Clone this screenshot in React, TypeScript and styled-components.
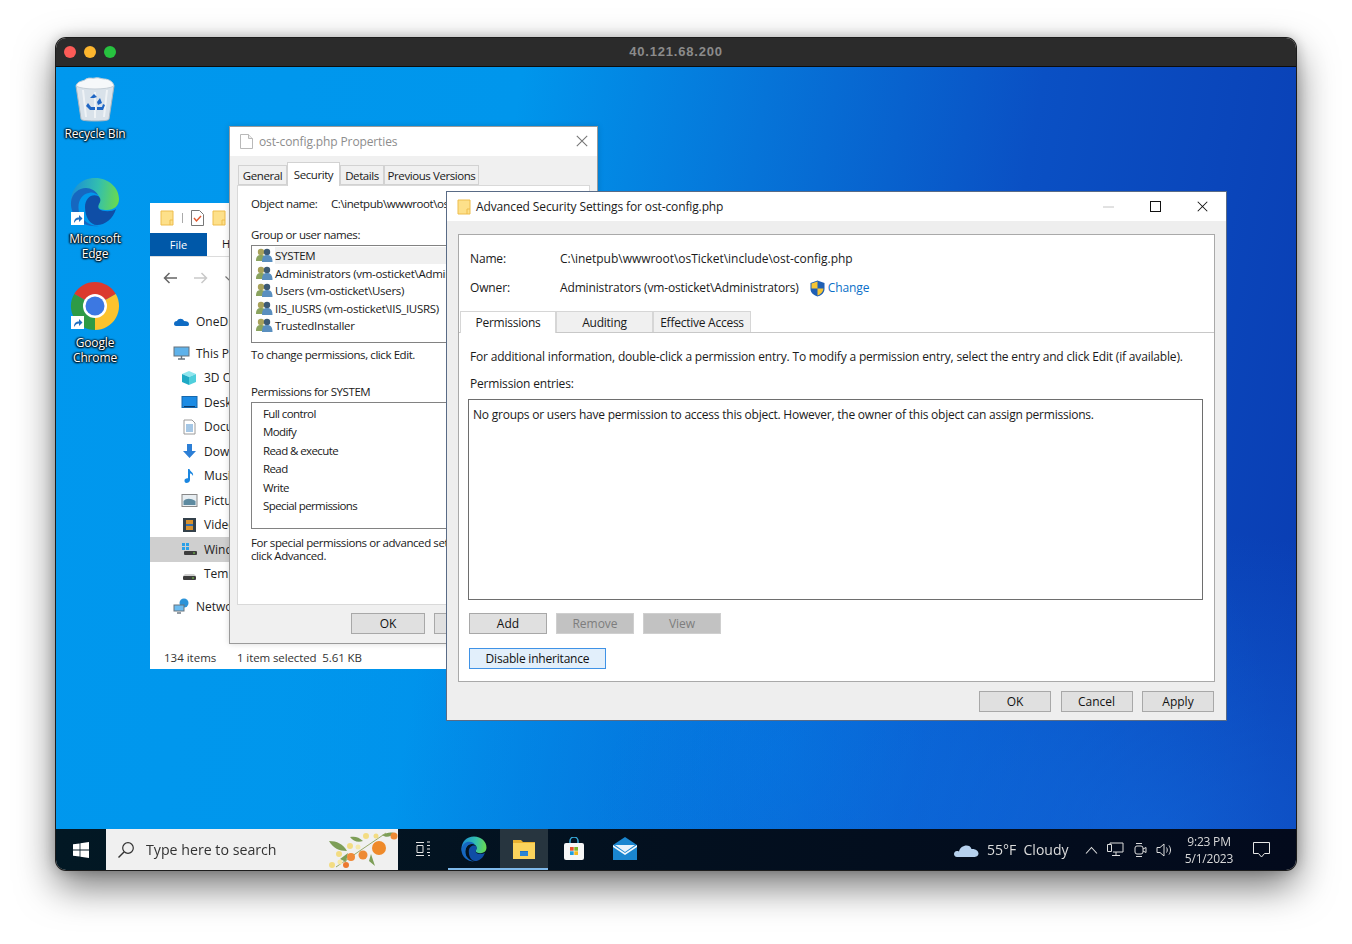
import React from "react";
import styled, { createGlobalStyle } from "styled-components";

const uiFont = `"Open Sans", "Noto Sans", "Liberation Sans", sans-serif`;

const GlobalStyle = createGlobalStyle`
  html, body { margin: 0; padding: 0; background: #fff; }
  body { font-family: ${uiFont}; font-size: 12px; color: #1a1a1a; }
  * { box-sizing: border-box; }
`;

const Page = styled.div`
  width: 1352px;
  height: 944px;
  padding: 38px 56px 74px;
  overflow: hidden;
`;
const MacWindow = styled.div`
  height: 832px;
  display: flex;
  flex-direction: column;
  border-radius: 10px;
  overflow: hidden;
  box-shadow: 0 0 0 1px #1c1c1c, 0 16px 38px rgba(0, 0, 0, 0.55), 0 0 14px rgba(0, 0, 0, 0.25);
  filter: blur(0.3px);
`;
const MacBar = styled.div`
  position: relative;
  height: 29px;
  flex: none;
  background: #2b2b2b;
  border-bottom: 1px solid #0c0c0c;
  display: flex;
  align-items: center;
  justify-content: center;
`;
const Lights = styled.div`
  position: absolute;
  left: 8px;
  display: flex;
  gap: 8px;
`;
const Light = styled.span<{ $c: string }>`
  width: 12px;
  height: 12px;
  border-radius: 50%;
  background: ${(p) => p.$c};
`;
const MacTitle = styled.div`
  color: #8b8b8b;
  font: 700 13px "Liberation Sans", sans-serif;
  letter-spacing: 0.8px;
  margin-top: -2px;
`;
const Desktop = styled.div`
  position: relative;
  flex: 1;
  overflow: hidden;
  background:
    radial-gradient(ellipse 560px 300px at 88% 100%, rgba(20, 110, 225, 0.55), transparent),
    radial-gradient(ellipse 500px 420px at 58% 90%, rgba(0, 130, 235, 0.5), transparent),
    linear-gradient(100deg, #0098ee 0%, #0096ec 34%, #0674d8 52%, #0a50c4 72%, #0a3cb2 100%);
`;
const IconColumn = styled.div`
  display: flex;
  flex-direction: column;
  width: 78px;
  padding-top: 9px;
`;
const DeskIcon = styled.div<{ $mt?: number }>`
  position: relative;
  display: flex;
  flex-direction: column;
  align-items: center;
  margin-top: ${(p) => p.$mt || 0}px;
  svg { display: block; }
`;
const DeskLabel = styled.div`
  color: #fff;
  font-size: 12px;
  line-height: 15.5px;
  letter-spacing: -0.15px;
  text-align: center;
  margin-top: 4px;
  text-shadow: 0 0 2px #000, 0 1px 2px #000, 1px 0 2px #000, -1px 0 2px #000;
`;
const Shortcut = styled.span`
  position: absolute;
  left: 15px;
  top: 35px;
  width: 13px;
  height: 13px;
  background: #fff;
  display: flex;
  align-items: center;
  justify-content: center;
`;

/* windows */
const Explorer = styled.div`
  position: absolute;
  left: 94px;
  top: 136px;
  width: 340px;
  height: 466px;
  background: #fff;
  display: flex;
  flex-direction: column;
`;
const QuickBar = styled.div`
  height: 30px;
  flex: none;
  display: flex;
  align-items: center;
  gap: 8px;
  padding-left: 10px;
`;
const QuickDivider = styled.span`
  width: 1px;
  height: 10px;
  background: #aaa;
`;
const Ribbon = styled.div`
  height: 24px;
  flex: none;
  display: flex;
  border-bottom: 1px solid #dcdcdc;
`;
const FileTab = styled.div`
  width: 57px;
  background: #0058a8;
  color: #fff;
  display: flex;
  align-items: center;
  justify-content: center;
  font-size: 11px;
`;
const HomeTab = styled.div`
  padding-left: 15px;
  line-height: 22px;
  font-size: 11px;
`;
const NavRow = styled.div`
  height: 52px;
  flex: none;
  display: flex;
  align-items: center;
  padding: 0 0 10px 13px;
  gap: 17px;
  color: #666;
`;
const Tree = styled.div`
  display: flex;
  flex-direction: column;
  flex: 1;
`;
const TreeRow = styled.div<{ $indent: number; $gap?: number; $sel?: boolean }>`
  height: 24.5px;
  flex: none;
  display: flex;
  align-items: center;
  gap: 6px;
  margin-top: ${(p) => p.$gap || 0}px;
  padding-left: ${(p) => p.$indent}px;
  background: ${(p) => (p.$sel ? "#cfcfcf" : "transparent")};
  font-size: 12px;
  white-space: nowrap;
  color: #222;
`;
const StatusBar = styled.div`
  height: 24px;
  flex: none;
  display: flex;
  align-items: center;
  padding-left: 14px;
  font-size: 11.5px;
  color: #333;
  span:first-child { width: 73px; }
  span + span { letter-spacing: -0.1px; }
`;

const Props = styled.div`
  position: absolute;
  left: 173px;
  top: 59px;
  width: 369px;
  height: 518px;
  background: #f0f0f0;
  border: 1px solid #9a9a9a;
  display: flex;
  flex-direction: column;
  box-shadow: 0 0 6px rgba(0, 0, 0, 0.15);
`;
const PropsTitle = styled.div`
  height: 29px;
  flex: none;
  background: #fff;
  display: flex;
  align-items: center;
  padding-left: 10px;
  gap: 6px;
  color: #8d8d8d;
  font-size: 12px;
  letter-spacing: -0.12px;
  position: relative;
`;
const CloseSpot = styled.div`
  position: absolute;
  right: 9px;
  top: 8px;
  line-height: 0;
`;
const PropTabs = styled.div`
  height: 29px;
  flex: none;
  display: flex;
  align-items: flex-end;
  padding-left: 8px;
  position: relative;
  z-index: 1;
`;
const PropTab = styled.div<{ $w: number; $active?: boolean }>`
  width: ${(p) => p.$w}px;
  height: ${(p) => (p.$active ? 24 : 20)}px;
  background: ${(p) => (p.$active ? "#fff" : "#f0f0f0")};
  border: 1px solid #d2d2d2;
  border-bottom: ${(p) => (p.$active ? "none" : "1px solid #d2d2d2")};
  margin-bottom: ${(p) => (p.$active ? -1 : 0)}px;
  font-size: 11.5px;
  letter-spacing: -0.42px;
  display: flex;
  align-items: center;
  justify-content: center;
`;
const PropPage = styled.div`
  margin: 0 7px;
  height: 420px;
  flex: none;
  background: #fff;
  border: 1px solid #d9d9d9;
  padding: 10px 12px 0 13px;
  font-size: 11.5px;
  letter-spacing: -0.42px;
  line-height: 16px;
  white-space: nowrap;
  overflow: hidden;
`;
const ObjectRow = styled.div`
  display: flex;
  span:first-child { width: 80px; flex: none; }
`;
const PropLabel = styled.div<{ $mt: number }>`
  margin-top: ${(p) => p.$mt}px;
`;
const PropList = styled.div<{ $h: number; $pad: number }>`
  height: ${(p) => p.$h}px;
  border: 1px solid #828282;
  margin-top: 2px;
  padding-top: ${(p) => p.$pad}px;
  overflow: hidden;
`;
const UserRow = styled.div<{ $sel?: boolean }>`
  height: 17.5px;
  display: flex;
  align-items: center;
  gap: 2px;
  padding-left: 4px;
  letter-spacing: -0.3px;
  span { background: ${(p) => (p.$sel ? "#f0f0f0" : "transparent")}; flex: 1; line-height: 17px; }
`;
const PermRow = styled.div`
  height: 18.4px;
  line-height: 18.4px;
  padding-left: 11px;
  letter-spacing: -0.6px;
`;
const SmallNote = styled.div`
  line-height: 13px;
  margin-top: -1px;
`;
const PropFoot = styled.div`
  display: flex;
  padding: 8px 0 0 121px;
  gap: 9px;
`;
const Button = styled.div<{ $w: number; $off?: boolean; $focus?: boolean }>`
  width: ${(p) => p.$w}px;
  height: 21px;
  flex: none;
  display: flex;
  align-items: center;
  justify-content: center;
  font-size: 12px;
  letter-spacing: ${(p) => (p.$focus ? "-0.2px" : "0")};
  color: ${(p) => (p.$off ? "#7d7d7d" : "#111")};
  background: ${(p) => (p.$focus ? "#e2effb" : p.$off ? "#c2c2c2" : "#e0e0e0")};
  border: 1px solid ${(p) => (p.$focus ? "#3f92e6" : p.$off ? "#cfcfcf" : "#a8a8a8")};
`;

const Advanced = styled.div`
  position: absolute;
  left: 390px;
  top: 124px;
  width: 781px;
  height: 530px;
  background: #eeeeee;
  border: 1px solid #596b86;
  display: flex;
  flex-direction: column;
`;
const AdvTitle = styled.div`
  position: relative;
  height: 29px;
  flex: none;
  background: #fff;
  display: flex;
  align-items: center;
  padding-left: 10px;
  gap: 5px;
  font-size: 12px;
  letter-spacing: -0.12px;
`;
const WinButtons = styled.div`
  position: absolute;
  right: 0;
  top: 0;
  height: 29px;
  display: flex;
  align-items: center;
`;
const WinButton = styled.div`
  width: 47px;
  display: flex;
  justify-content: center;
`;
const AdvBody = styled.div`
  flex: 1;
  padding: 13px 11px 0 11px;
`;
const Panel = styled.div`
  height: 448px;
  background: #fff;
  border: 1px solid #a9a9a9;
  padding-top: 16px;
  display: flex;
  flex-direction: column;
`;
const InfoRow = styled.div`
  display: grid;
  grid-template-columns: 90px auto 1fr;
  padding-left: 11px;
  height: 29px;
  line-height: 16px;
  font-size: 12px;
  letter-spacing: -0.15px;
`;
const PathText = styled.span`
  letter-spacing: -0.03px;
`;
const ChangeLink = styled.div`
  display: flex;
  align-items: flex-start;
  gap: 3px;
  margin-left: 11px;
  color: #0a6fc8;
  letter-spacing: -0.1px;
`;
const AdvTabs = styled.div`
  display: flex;
  height: 22px;
  margin-top: 2px;
  padding-left: 1px;
  border-bottom: 1px solid #c8c8c8;
  flex: none;
`;
const AdvTab = styled.div<{ $w: number; $active?: boolean }>`
  width: ${(p) => p.$w}px;
  height: ${(p) => (p.$active ? 22 : 21)}px;
  background: ${(p) => (p.$active ? "#fff" : "#f0f0f0")};
  border: 1px solid #d6d6d6;
  border-bottom: none;
  display: flex;
  align-items: center;
  justify-content: center;
  font-size: 12px;
  letter-spacing: -0.25px;
  position: relative;
`;
const TabBody = styled.div`
  padding: 16px 11px 0 9px;
  font-size: 12px;
  line-height: 16px;
  letter-spacing: -0.18px;
  white-space: nowrap;
`;
const Intro = styled.div`
  padding-left: 2px;
`;
const EntriesLabel = styled.div`
  margin-top: 11px;
  padding-left: 2px;
`;
const EntriesBox = styled.div`
  height: 201px;
  margin-top: 7px;
  border: 1px solid #6e6e6e;
  padding: 7px 4px;
  letter-spacing: -0.23px;
`;
const ButtonRow = styled.div<{ $mt: number }>`
  display: flex;
  gap: 9px;
  margin-top: ${(p) => p.$mt}px;
  padding-left: 1px;
`;
const AdvFoot = styled.div`
  display: flex;
  justify-content: flex-end;
  gap: 9.5px;
  padding: 9px 1px 0 0;
`;

/* taskbar */
const Taskbar = styled.div`
  height: 41px;
  flex: none;
  display: flex;
  align-items: stretch;
  background: linear-gradient(90deg, #021824, #03101f 50%, #030a1c);
  color: #e8e8e8;
`;
const StartCell = styled.div`
  width: 50px;
  display: flex;
  align-items: center;
  justify-content: center;
`;
const SearchBox = styled.div`
  position: relative;
  width: 292px;
  background: #f0f0f0;
  display: flex;
  align-items: center;
  gap: 11px;
  padding-left: 11px;
  color: #333;
  font-size: 14.2px;
  overflow: hidden;
`;
const Flowers = styled.svg`
  position: absolute;
  right: 0;
  top: 0;
`;
const TaskCell = styled.div<{ $w: number; $active?: boolean; $open?: boolean }>`
  width: ${(p) => p.$w}px;
  display: flex;
  align-items: center;
  justify-content: center;
  background: ${(p) => (p.$active ? "#27353f" : "transparent")};
  border-bottom: 2px solid ${(p) => (p.$open ? "#7fb9ea" : "transparent")};
`;
const TrayWrap = styled.div`
  margin-left: auto;
  display: flex;
  align-items: center;
`;
const WeatherText = styled.div`
  font-size: 14px;
  margin: 0 16px 0 8px;
  white-space: pre;
  color: #dcdcdc;
`;
const TrayIcons = styled.div`
  display: flex;
  align-items: center;
  gap: 9.5px;
  margin-right: 11px;
`;
const Clock = styled.div`
  width: 50px;
  text-align: center;
  font-size: 12px;
  line-height: 17px;
  color: #d8d8d8;
  letter-spacing: -0.2px;
`;
const NotifyCell = styled.div`
  width: 62px;
  padding-left: 19px;
  display: flex;
`;

/* drawings */
const FolderIcon = ({ s = 14 }: { s?: number }) => (
  <svg width={s} height={s + 2} viewBox="0 0 14 16">
    <path d="M1 1h9l3 0v14H1z" fill="#fde08a" stroke="#eebd4c" />
    <path d="M10 15v-5h3" fill="none" stroke="#eebd4c" />
  </svg>
);
const FileIcon = () => (
  <svg width="13" height="15" viewBox="0 0 13 15">
    <path d="M.5.5h8l4 4v10H.5z" fill="#fff" stroke="#b9b9b9" />
    <path d="M8.5.5v4h4" fill="#eee" stroke="#b9b9b9" />
  </svg>
);
const CheckFile = () => (
  <svg width="13" height="16" viewBox="0 0 13 16">
    <path d="M.5.5h8l4 4v11H.5z" fill="#fff" stroke="#777" />
    <path d="M3 8l2.5 3L10 6" fill="none" stroke="#e0562c" strokeWidth="1.4" />
  </svg>
);
const Users = () => (
  <svg width="17" height="15" viewBox="0 0 17 15">
    <circle cx="5" cy="4" r="3.2" fill="#a9a25a" />
    <path d="M0 13c0-5 2-6 5-6s5 1 5 6z" fill="#8aa35f" />
    <circle cx="11" cy="4" r="3.2" fill="#3d5a73" />
    <path d="M6 14c0-6 2-7 5-7s5.500 1 5.500 7z" fill="#5a8fbf" />
  </svg>
);
const Shield = () => (
  <svg width="15" height="17" viewBox="0 0 15 17">
    <path d="M7.500 0.500L14.500 3v6c0 4-3.500 6.500-7 7.500C4 15.500.5 13 .5 9V3z" fill="#1f5fb4" />
    <path d="M7.500 1.500V8.500H1.500V3.500zM7.500 8.500H13.500C13 12 10.500 14.500 7.500 15.500z" fill="#f7c533" />
  </svg>
);
const XIcon = ({ s = 12, c = "#222" }: { s?: number; c?: string }) => (
  <svg width={s} height={s} viewBox="0 0 12 12">
    <path d="M.8.8l10.400 10.400M11.200.8L.8 11.200" stroke={c} strokeWidth="1.1" />
  </svg>
);
const ShortcutArrow = () => (
  <svg width="11" height="11" viewBox="0 0 11 11">
    <path d="M2 10C2 6 4 4.500 7 4.500V2l3.500 3.500L7 9V6.500C5 6.500 3.500 7.500 2 10z" fill="#1f6fc0" />
  </svg>
);
const RecycleBin = () => (
  <svg width="44" height="46" viewBox="0 0 44 46">
    <path d="M3 10l5 33c0 1 3 2 14 2s14-1 14-2l5-33z" fill="#d9e2ea" stroke="#aab6c0" />
    <path d="M3 10C5 4 10 6 13 3c4-2 6 0 9-1 4-1 6 1 9 1 4 0 9 2 10 7-6 4-32 4-38 0z" fill="#f6f8fa" stroke="#c5ced6" />
    <path d="M10 14l3 27M34 14l-3 27M22 16v26" stroke="#fff" strokeWidth="2" opacity="0.6" />
    <path d="M17 22l4-4 3 3-3 1zM27 22l2 5-4 2-1-3zM15 27l3 4h4v3h-5l-4-4z" fill="#1f66c4" />
    <path d="M24 31h5l1-3 2 1-2 5h-6z" fill="#1f66c4" />
  </svg>
);
const EdgeLogo = ({ s = 50 }: { s?: number }) => (
  <svg width={s} height={s} viewBox="0 0 50 50">
    <defs>
      <linearGradient id={`eg${s}`} x1="0" y1="0.4" x2="1" y2="0.5">
        <stop offset="0" stopColor="#1b8fd6" />
        <stop offset="0.55" stopColor="#33bfae" />
        <stop offset="1" stopColor="#6ada4e" />
      </linearGradient>
    </defs>
    <path d="M1 25C1 11 11 1 25 1c14 0 24 10 24 21 0 7-5 11-12 11-5 0-9-1-9-4 0-2 2-3 2-6 0-5-5-9-11-8C10 16 6 28 9 38 4 35 1 31 1 25z" fill={`url(#eg${s})`} />
    <path d="M1 25c1-9 8-14 15-14 5 0 10 3 12 7-3-2-6-3-9-2C10 17 6 28 10 38c5 8 12 11 19 11C13 51 0 40 1 25z" fill="#1667c0" />
    <path d="M15 30c0-9 7-14 13-11 3 2 3 5 1 8-1 2-1 4 0 5 4 3 13 3 17 0-3 10-11 16-19 16-7 0-12-8-12-18z" fill="#0f4ea6" />
  </svg>
);
const ChromeLogo = ({ s = 50 }: { s?: number }) => (
  <svg width={s} height={s} viewBox="0 0 50 50">
    <path d="M25 25L4.200 13C8.500 5.500 16.200 1 25 1c8.800 0 16.800 4.800 20.800 12z" fill="#db3a2e" />
    <path d="M25 25L45.800 13C50.200 20.500 50 30 45.800 37 41.500 44.500 33.500 49 25 49z" fill="#fcc32e" />
    <path d="M25 25V49C16.500 49 8.500 44.500 4.200 37-.2 29.500-.2 20.500 4.200 13z" fill="#2e9b46" />
    <circle cx="25" cy="25" r="12" fill="#fff" />
    <circle cx="25" cy="25" r="9.500" fill="#3c78e2" />
  </svg>
);
const WinLogo = () => (
  <svg width="16" height="16" viewBox="0 0 16 16" fill="#fff">
    <path d="M0 2.300l6.600-.9v6.200H0zM7.400 1.300L16 0v7.600H7.400zM0 8.400h6.600v6.200L0 13.700zM7.400 8.400H16V16l-8.600-1.300z" />
  </svg>
);

const treeIcons: Record<string, React.ReactNode> = {
  cloud: <path d="M1 11c0-2 1-3 3-3 1-3 6-3 7 0 3 0 5 1 5 3s-1 2-3 2H3c-1 0-2-1-2-2z" fill="#0f6cc4" />,
  pc: (
    <>
      <rect x="1" y="2" width="15" height="9" fill="#5fb2ea" stroke="#66727c" />
      <path d="M5 14h7M8.500 11v3" stroke="#66727c" strokeWidth="1.4" />
    </>
  ),
  cube: (
    <>
      <path d="M8 1l7 3-7 3-7-3z" fill="#8fe6ee" />
      <path d="M1 4l7 3v8l-7-3z" fill="#1ea9c4" />
      <path d="M15 4L8 7v8l7-3z" fill="#4fcfdc" />
    </>
  ),
  desk: (
    <>
      <rect x="1" y="2.500" width="15" height="11" fill="#1b8be4" stroke="#1668ad" />
      <path d="M3 12.500h11" stroke="#0c3b6b" />
    </>
  ),
  doc: (
    <>
      <path d="M3 1h8l3 3v11H3z" fill="#fff" stroke="#9a9a9a" />
      <path d="M5 6h7M5 8h7M5 10h7M5 12h7" stroke="#4a8ecb" />
    </>
  ),
  down: <path d="M6 1h5v7h4l-6.500 7L2 8h4z" fill="#2c7fd6" />,
  music: <path d="M7 1h1.500c.5 3 4.500 3 3.500 7-1-2-2-2.500-3-2.500V12c0 2-2 3-3.500 3S3.500 14 3.500 12.500 5 10 7 10.300z" fill="#1a86e0" />,
  pic: (
    <>
      <rect x="1" y="2.500" width="15" height="12" fill="#e8eef2" stroke="#888" />
      <path d="M2.500 9c3-3 7-3 12 0v4h-12z" fill="#5d8aa0" />
    </>
  ),
  video: (
    <>
      <rect x="2" y="1" width="13" height="14" fill="#33404a" />
      <rect x="5" y="3" width="7" height="10" fill="#d8912e" />
      <path d="M5 8h7" stroke="#2f6fb4" strokeWidth="2" />
    </>
  ),
  windrive: (
    <>
      <path d="M1 2h3v3H1zM5 2h3v3H5zM1 6h3v3H1zM5 6h3v3H5z" fill="#2aa0e8" />
      <rect x="3" y="10" width="13" height="4" rx="1" fill="#3d3d3d" />
      <path d="M12 12h2" stroke="#7ad14a" />
    </>
  ),
  drive: (
    <>
      <path d="M4 8h9l2 2H2z" fill="#cfcfcf" />
      <rect x="2" y="10" width="13" height="4" rx="1" fill="#3d3d3d" />
      <path d="M11 12h2" stroke="#7ad14a" />
    </>
  ),
  net: (
    <>
      <circle cx="11" cy="5" r="4.500" fill="#2c93d8" />
      <rect x="1" y="7" width="10" height="6" fill="#6cbcf0" stroke="#66727c" />
      <path d="M4 15h4" stroke="#66727c" strokeWidth="1.400" />
    </>
  ),
};

const treeRows = [
  { k: "cloud", t: "OneDrive", i: 23, g: 0 },
  { k: "pc", t: "This PC", i: 23, g: 7.5 },
  { k: "cube", t: "3D Objects", i: 31, g: 0 },
  { k: "desk", t: "Desktop", i: 31, g: 0 },
  { k: "doc", t: "Documents", i: 31, g: 0 },
  { k: "down", t: "Downloads", i: 31, g: 0 },
  { k: "music", t: "Music", i: 31, g: 0 },
  { k: "pic", t: "Pictures", i: 31, g: 0 },
  { k: "video", t: "Videos", i: 31, g: 0 },
  { k: "windrive", t: "Windows (C:)", i: 31, g: 0, sel: true },
  { k: "drive", t: "Temporary Storage (D:)", i: 31, g: 0 },
  { k: "net", t: "Network", i: 23, g: 8 },
];

const users = [
  "SYSTEM",
  "Administrators (vm-osticket\\Administrators)",
  "Users (vm-osticket\\Users)",
  "IIS_IUSRS (vm-osticket\\IIS_IUSRS)",
  "TrustedInstaller",
];
const perms = ["Full control", "Modify", "Read & execute", "Read", "Write", "Special permissions"];

export default function App() {
  return (
    <Page>
      <GlobalStyle />
      <MacWindow>
        <MacBar>
          <Lights>
            <Light $c="#fc5b57" />
            <Light $c="#fdb62e" />
            <Light $c="#27c23f" />
          </Lights>
          <MacTitle>40.121.68.200</MacTitle>
        </MacBar>
        <Desktop>
          <IconColumn>
            <DeskIcon>
              <RecycleBin />
              <DeskLabel>Recycle Bin</DeskLabel>
            </DeskIcon>
            <DeskIcon $mt={35}>
              <EdgeLogo />
              <Shortcut>
                <ShortcutArrow />
              </Shortcut>
              <DeskLabel>
                Microsoft
                <br />
                Edge
              </DeskLabel>
            </DeskIcon>
            <DeskIcon $mt={19}>
              <ChromeLogo />
              <Shortcut>
                <ShortcutArrow />
              </Shortcut>
              <DeskLabel>
                Google
                <br />
                Chrome
              </DeskLabel>
            </DeskIcon>
          </IconColumn>

          <Explorer>
            <QuickBar>
              <FolderIcon />
              <QuickDivider />
              <CheckFile />
              <FolderIcon />
            </QuickBar>
            <Ribbon>
              <FileTab>File</FileTab>
              <HomeTab>Home</HomeTab>
            </Ribbon>
            <NavRow>
              <svg width="14" height="12" viewBox="0 0 14 12">
                <path d="M14 6H2M6.500 1L1.500 6l5 5" fill="none" stroke="#666" strokeWidth="1.500" />
              </svg>
              <svg width="14" height="12" viewBox="0 0 14 12">
                <path d="M0 6h12M7.500 1l5 5-5 5" fill="none" stroke="#c9c9c9" strokeWidth="1.500" />
              </svg>
              <svg width="8" height="5" viewBox="0 0 8 5">
                <path d="M.5.500L4 4 7.500.500" fill="none" stroke="#777" strokeWidth="1.200" />
              </svg>
            </NavRow>
            <Tree>
              {treeRows.map((r) => (
                <TreeRow key={r.t} $indent={r.i} $gap={r.g} $sel={r.sel}>
                  <svg width="17" height="16" viewBox="0 0 17 16">
                    {treeIcons[r.k]}
                  </svg>
                  {r.t}
                </TreeRow>
              ))}
            </Tree>
            <StatusBar>
              <span>134 items</span>
              <span>1 item selected&nbsp; 5.61 KB</span>
            </StatusBar>
          </Explorer>

          <Props>
            <PropsTitle>
              <FileIcon />
              ost-config.php Properties
              <CloseSpot>
                <XIcon c="#777" />
              </CloseSpot>
            </PropsTitle>
            <PropTabs>
              <PropTab $w={49}>General</PropTab>
              <PropTab $w={53} $active>
                Security
              </PropTab>
              <PropTab $w={44}>Details</PropTab>
              <PropTab $w={95}>Previous Versions</PropTab>
            </PropTabs>
            <PropPage>
              <ObjectRow>
                <span>Object name:</span>
                <span>C:\inetpub\wwwroot\osTicket\include\ost-config.php</span>
              </ObjectRow>
              <PropLabel $mt={15}>Group or user names:</PropLabel>
              <PropList $h={98} $pad={1}>
                {users.map((u, i) => (
                  <UserRow key={u} $sel={i === 0}>
                    <Users />
                    <span>{u}</span>
                  </UserRow>
                ))}
              </PropList>
              <PropLabel $mt={4}>To change permissions, click Edit.</PropLabel>
              <PropLabel $mt={21}>Permissions for SYSTEM</PropLabel>
              <PropList $h={127} $pad={2}>
                {perms.map((p) => (
                  <PermRow key={p}>{p}</PermRow>
                ))}
              </PropList>
              <PropLabel $mt={8}>
                <SmallNote>
                  For special permissions or advanced settings,
                  <br />
                  click Advanced.
                </SmallNote>
              </PropLabel>
            </PropPage>
            <PropFoot>
              <Button $w={74}>OK</Button>
              <Button $w={74}>Cancel</Button>
            </PropFoot>
          </Props>

          <Advanced>
            <AdvTitle>
              <FolderIcon />
              Advanced Security Settings for ost-config.php
              <WinButtons>
                <WinButton>
                  <svg width="11" height="2" viewBox="0 0 11 2">
                    <path d="M0 1h11" stroke="#c4c4c4" />
                  </svg>
                </WinButton>
                <WinButton>
                  <svg width="11" height="11" viewBox="0 0 11 11">
                    <rect x=".5" y=".5" width="10" height="10" fill="none" stroke="#111" />
                  </svg>
                </WinButton>
                <WinButton>
                  <XIcon s={11} c="#111" />
                </WinButton>
              </WinButtons>
            </AdvTitle>
            <AdvBody>
              <Panel>
                <InfoRow>
                  <span>Name:</span>
                  <PathText>C:\inetpub\wwwroot\osTicket\include\ost-config.php</PathText>
                </InfoRow>
                <InfoRow>
                  <span>Owner:</span>
                  <span>Administrators (vm-osticket\Administrators)</span>
                  <ChangeLink>
                    <Shield />
                    Change
                  </ChangeLink>
                </InfoRow>
                <AdvTabs>
                  <AdvTab $w={96} $active>
                    Permissions
                  </AdvTab>
                  <AdvTab $w={97}>Auditing</AdvTab>
                  <AdvTab $w={98}>Effective Access</AdvTab>
                </AdvTabs>
                <TabBody>
                  <Intro>
                    For additional information, double-click a permission entry. To modify a permission entry, select the entry and click Edit (if available).
                  </Intro>
                  <EntriesLabel>Permission entries:</EntriesLabel>
                  <EntriesBox>
                    No groups or users have permission to access this object. However, the owner of this object can assign permissions.
                  </EntriesBox>
                  <ButtonRow $mt={13}>
                    <Button $w={78}>Add</Button>
                    <Button $w={78} $off>
                      Remove
                    </Button>
                    <Button $w={78} $off>
                      View
                    </Button>
                  </ButtonRow>
                  <ButtonRow $mt={14}>
                    <Button $w={137} $focus>
                      Disable inheritance
                    </Button>
                  </ButtonRow>
                </TabBody>
              </Panel>
              <AdvFoot>
                <Button $w={72}>OK</Button>
                <Button $w={72}>Cancel</Button>
                <Button $w={72}>Apply</Button>
              </AdvFoot>
            </AdvBody>
          </Advanced>
        </Desktop>
        <Taskbar>
          <StartCell>
            <WinLogo />
          </StartCell>
          <SearchBox>
            <svg width="18" height="18" viewBox="0 0 18 18">
              <circle cx="11" cy="7" r="5.300" fill="none" stroke="#333" strokeWidth="1.200" />
              <path d="M7 11l-5.500 5.500" stroke="#333" strokeWidth="1.400" />
            </svg>
            Type here to search
            <Flowers width="72" height="41" viewBox="0 0 72 41">
              <path d="M3 12c8 0 14 3 18 10-8 0-14-3-18-10zM24 8c5-1 9 0 13 4-5 2-10 0-13-4zM45 25l4 12-6-5zM14 30l8-6-2 9zM56 6c4-2 8-3 12-2-3 4-8 5-12 2z" fill="#7d9e57" />
              <path d="M10 38L60 4" stroke="#97a86a" strokeWidth="1" />
              <circle cx="53" cy="19" r="7" fill="#ef8a2a" />
              <circle cx="37" cy="26" r="4.500" fill="#ee8a35" />
              <circle cx="25" cy="28" r="4" fill="#ef8a3a" />
              <circle cx="68" cy="7" r="3.500" fill="#ee8a35" />
              <circle cx="20" cy="36" r="3" fill="#ec7a30" />
              <circle cx="40" cy="7" r="3" fill="#f3dc82" />
              <circle cx="24" cy="17" r="3" fill="#f3dc82" />
              <circle cx="50" cy="7" r="2.500" fill="#f3dc82" />
              <circle cx="13" cy="25" r="3" fill="#f3dc82" />
              <circle cx="6" cy="36" r="3" fill="#f3dc82" />
              <circle cx="32" cy="18" r="2.500" fill="#f6e9a8" />
              <circle cx="14" cy="33" r="2.500" fill="#f6e9a8" />
            </Flowers>
          </SearchBox>
          <TaskCell $w={50}>
            <svg width="16" height="16" viewBox="0 0 16 16" fill="none" stroke="#e4e4e4">
              <path d="M1 1.500h8M1 14.500h8M2 4.500h6v7H2zM12 1h3M12 4.500h3M12 8h3M12 11.500h3M13 14.500h2" />
            </svg>
          </TaskCell>
          <TaskCell $w={52} $open>
            <EdgeLogo s={26} />
          </TaskCell>
          <TaskCell $w={48} $active $open>
            <svg width="24" height="22" viewBox="0 0 24 22">
              <path d="M1 2h8l2 2h12v3H1z" fill="#e9b02f" />
              <rect x="1" y="5" width="22" height="16" fill="#fbd35c" />
              <path d="M8 13h8v5h-2v-3h-4v3H8z" fill="#1e72c0" />
              <rect x="8" y="14" width="8" height="4" fill="#2b84d4" />
            </svg>
          </TaskCell>
          <TaskCell $w={52}>
            <svg width="24" height="24" viewBox="0 0 24 24">
              <path d="M8 6V4a4 4 0 0 1 8 0v2" fill="none" stroke="#35a8d8" strokeWidth="1.500" />
              <rect x="2" y="6" width="20" height="17" rx="2" fill="#f6f6f6" />
              <rect x="8" y="10" width="3.700" height="3.700" fill="#e6502c" />
              <rect x="12.300" y="10" width="3.700" height="3.700" fill="#7bb52a" />
              <rect x="8" y="14.300" width="3.700" height="3.700" fill="#1f9fe0" />
              <rect x="12.300" y="14.300" width="3.700" height="3.700" fill="#f5b81c" />
            </svg>
          </TaskCell>
          <TaskCell $w={50}>
            <svg width="24" height="24" viewBox="0 0 24 24">
              <path d="M0 8L12 0l12 8v15H0z" fill="#1a86d0" />
              <path d="M0 8l12 8 12-8v2L12 18 0 10z" fill="#f2f8fd" />
              <path d="M2 8h20l-10 7z" fill="#e8f3fb" />
            </svg>
          </TaskCell>
          <TrayWrap>
            <svg width="25" height="16" viewBox="0 0 25 16">
              <path d="M3 15c-4 0-4-6 0-6 1 0 1 0 2 .5C6 3 16 1 17.500 7c4-.5 7 2 7 4.500S22 15 20 15z" fill="#b6d1ee" />
            </svg>
            <WeatherText>55°F  Cloudy</WeatherText>
            <TrayIcons>
              <svg width="13" height="8" viewBox="0 0 13 8">
                <path d="M1 7.500l5.500-6 5.500 6" fill="none" stroke="#ddd" strokeWidth="1.100" />
              </svg>
              <svg width="17" height="15" viewBox="0 0 17 15" fill="none" stroke="#ddd">
                <path d="M3 2V1h13v9H6M9 10v3M5 13.500h8M.5 2.500h4v7h-4z" />
              </svg>
              <svg width="13" height="16" viewBox="0 0 13 16" fill="none" stroke="#ddd">
                <rect x="1" y="4" width="8" height="8" rx="2" />
                <path d="M9 7l3-1.500v5L9 9M2 1.500h6M2 14.500h6" />
              </svg>
              <svg width="17" height="14" viewBox="0 0 17 14" fill="none" stroke="#ddd">
                <path d="M1 4.500h3L8 1v12L4 9.500H1zM10.500 4.500c1 1.500 1 3.500 0 5M13 2.500c2 3 2 6 0 9" />
              </svg>
            </TrayIcons>
            <Clock>
              9:23 PM
              <br />
              5/1/2023
            </Clock>
            <NotifyCell>
              <svg width="17" height="16" viewBox="0 0 17 16" fill="none" stroke="#e6e6e6">
                <path d="M.5.500h16v11h-5L8.500 15l-3-3.500h-5z" />
              </svg>
            </NotifyCell>
          </TrayWrap>
        </Taskbar>
      </MacWindow>
    </Page>
  );
}
